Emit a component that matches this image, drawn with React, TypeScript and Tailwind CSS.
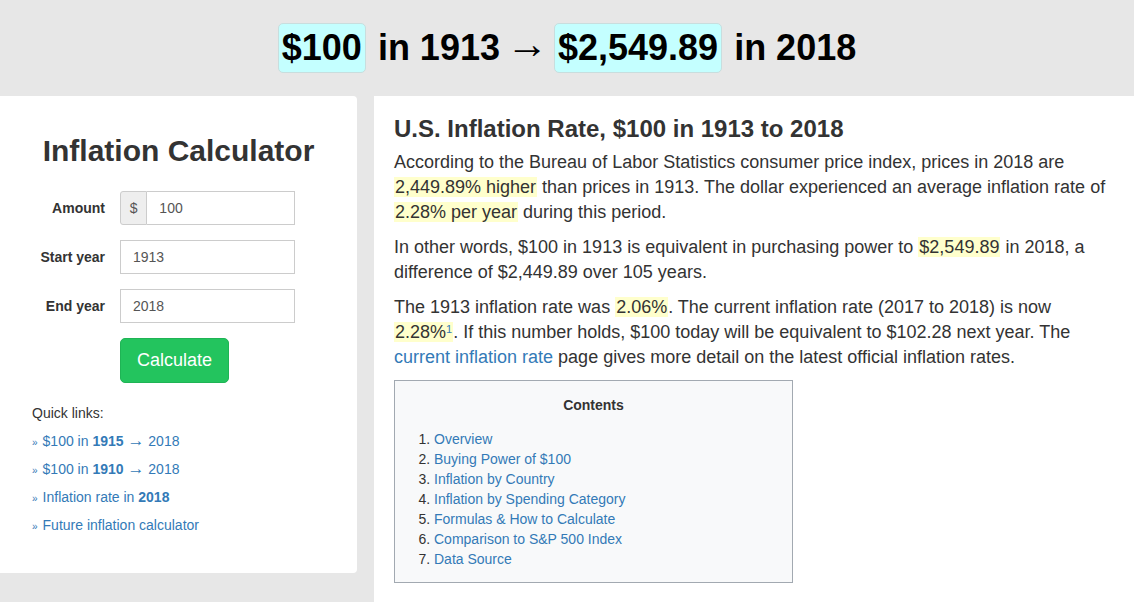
const quickLinks = [
  { pre: "$100 in ", bold: "1915", arrow: true },
  { pre: "$100 in ", bold: "1910", arrow: true },
  { pre: "Inflation rate in ", bold: "2018", arrow: false },
  { pre: "Future inflation calculator", bold: "", arrow: false },
];

const contents = [
  "Overview",
  "Buying Power of $100",
  "Inflation by Country",
  "Inflation by Spending Category",
  "Formulas & How to Calculate",
  "Comparison to S&P 500 Index",
  "Data Source",
];

const Mark = ({ children }: { children: React.ReactNode }) => (
  <span className="bg-[#ffffcc] px-px">{children}</span>
);

const FormRow = ({ label, children }: { label: string; children: React.ReactNode }) => (
  <div className="flex items-center">
    <label className="w-[105px] text-right text-[14px] font-bold text-[#333]">{label}</label>
    <div className="ml-[15px] w-[175px]">{children}</div>
  </div>
);

const App = () => {
  return (
    <div className="min-h-screen bg-[#e7e7e7] font-['Liberation_Sans',Arial,sans-serif] text-[#333]">
      {/* Result banner */}
      <div className="flex h-[96px] items-center justify-center text-[36px] font-bold text-black">
        <span className="rounded-[5px] border border-[#c8dede] bg-[#c4ffff] px-[3px] leading-[48px]">$100</span>
        <span className="ml-[12px]">in 1913</span>
        <span className="mx-[6px] -translate-y-[4px] font-['Liberation_Serif',serif] text-[42px] leading-none font-normal">→</span>
        <span className="rounded-[5px] border border-[#c8dede] bg-[#c4ffff] px-[3px] leading-[48px]">$2,549.89</span>
        <span className="ml-[12px]">in 2018</span>
      </div>

      <div className="flex items-start">
        {/* Calculator card */}
        <div className="h-[477px] w-[357px] shrink-0 rounded-r-[4px] bg-white pt-[37px]">
          <h1 className="text-center text-[30px] leading-[36px] font-bold text-[#333]">Inflation Calculator</h1>
          <div className="mt-[22px] flex flex-col gap-[15px]">
            <FormRow label="Amount">
              <div className="flex h-[34px]">
                <span className="flex w-[33px] items-center justify-center rounded-l-[3px] border border-[#ccc] bg-[#eee] text-[14px] text-[#555]">$</span>
                <input
                  readOnly
                  value="100"
                  className="h-full w-full border border-l-0 border-[#ccc] px-[12px] text-[14px] text-[#555] outline-none"
                />
              </div>
            </FormRow>
            <FormRow label="Start year">
              <input readOnly value="1913" className="h-[34px] w-full border border-[#ccc] px-[12px] text-[14px] text-[#555] outline-none" />
            </FormRow>
            <FormRow label="End year">
              <input readOnly value="2018" className="h-[34px] w-full border border-[#ccc] px-[12px] text-[14px] text-[#555] outline-none" />
            </FormRow>
            <div className="pl-[120px]">
              <button className="h-[45px] w-[109px] rounded-[5px] border border-[#1fb455] bg-[#23c45e] text-[18px] text-white">
                Calculate
              </button>
            </div>
          </div>

          <div className="mt-[20px] pl-[32px]">
            <p className="text-[14px] leading-[20px] text-[#333]">Quick links:</p>
            <ul className="mt-[8px] flex flex-col gap-[8px]">
              {quickLinks.map((l) => (
                <li key={l.pre + l.bold} className="h-[20px] text-[14px] leading-[20px] text-[#337ab7]">
                  <span className="mr-[5px] text-[10px] leading-none">»</span>
                  {l.pre}
                  {l.bold && <b>{l.bold}</b>}
                  {l.arrow && (
                    <>
                      {" "}
                      <span className="font-['Liberation_Serif',serif] text-[17px] leading-none">→</span> 2018
                    </>
                  )}
                </li>
              ))}
            </ul>
          </div>
        </div>

        {/* Article */}
        <div className="ml-[17px] min-h-[506px] flex-1 bg-white px-[20px] pt-[18px] pb-[20px]">
          <h2 className="text-[24px] leading-[30px] font-bold text-[#333]">U.S. Inflation Rate, $100 in 1913 to 2018</h2>
          <div className="mt-[6px] flex flex-col gap-[10px] text-[18px] leading-[25px] text-[#333]">
            <p>
              According to the Bureau of Labor Statistics consumer price index, prices in 2018 are{" "}
              <Mark>2,449.89% higher</Mark> than prices in 1913. The dollar experienced an average inflation rate of{" "}
              <Mark>2.28% per year</Mark> during this period.
            </p>
            <p>
              In other words, $100 in 1913 is equivalent in purchasing power to <Mark>$2,549.89</Mark> in 2018, a
              difference of $2,449.89 over 105 years.
            </p>
            <p>
              The 1913 inflation rate was <Mark>2.06%</Mark>. The current inflation rate (2017 to 2018) is now{" "}
              <Mark>
                2.28%<sup className="text-[11px] text-[#337ab7]">1</sup>
              </Mark>
              . If this number holds, $100 today will be equivalent to $102.28 next year. The{" "}
              <a className="text-[#337ab7]">current inflation rate</a> page gives more detail on the latest official
              inflation rates.
            </p>
          </div>

          <div className="mt-[10px] w-[399px] border border-[#a2a9b1] bg-[#f8f9fa] px-[7px] pt-[14px] pb-[13px]">
            <p className="text-center text-[14px] leading-[20px] font-bold text-[#333]">Contents</p>
            <ol className="mt-[14px] list-decimal pl-[32px] text-[14px] leading-[20px] text-[#333]">
              {contents.map((c) => (
                <li key={c}>
                  <a className="text-[#337ab7]">{c}</a>
                </li>
              ))}
            </ol>
          </div>
        </div>
      </div>
    </div>
  );
};

export default App;
